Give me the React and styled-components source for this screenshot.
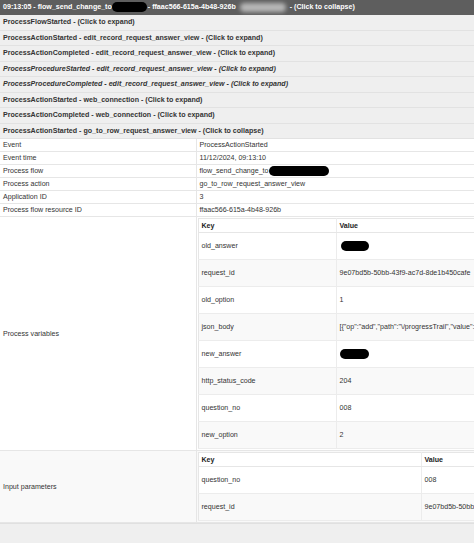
import React from "react";
import styled, { createGlobalStyle } from "styled-components";

const GlobalStyle = createGlobalStyle`
  html, body {
    margin: 0;
    padding: 0;
    overflow: hidden;
    background: #ffffff;
  }
  body {
    font-family: "Liberation Sans", Arial, sans-serif;
    font-size: 7.1px;
    color: #333333;
  }
`;

const Page = styled.div`
  width: 474px;
  height: 543px;
  overflow: hidden;
`;

const Wide = styled.div`
  width: 820px;
`;

const Header = styled.div`
  height: 15px;
  line-height: 14px;
  padding: 0 3px;
  background: #5e5e5e;
  color: #ffffff;
  font-weight: bold;
  white-space: nowrap;
  box-sizing: border-box;
`;

const EventRow = styled.div`
  height: 15.5px;
  line-height: 15px;
  padding: 0 3px;
  background: #efefef;
  border-bottom: 1px solid #e2e2e2;
  box-sizing: border-box;
  font-weight: bold;
  font-style: ${(p) => (p.$italic ? "italic" : "normal")};
  white-space: nowrap;
  cursor: pointer;
`;

const Redact = styled.span`
  display: inline-block;
  vertical-align: middle;
  width: ${(p) => p.$w}px;
  height: ${(p) => p.$h || 10}px;
  margin: 0 ${(p) => p.$mr || 1}px 0 ${(p) => p.$ml || 0}px;
  border-radius: 6px;
  background: ${(p) => (p.$blur ? "rgba(255,255,255,0.55)" : "#000000")};
  filter: ${(p) => (p.$blur ? "blur(2px)" : "none")};
`;

const Table = styled.table`
  border-collapse: collapse;
  table-layout: fixed;
  width: 100%;
`;

const Cell = styled.td`
  border-bottom: 1px solid #e6e6e6;
  border-right: ${(p) => (p.$label ? "1px solid #e6e6e6" : "none")};
  padding: ${(p) => (p.$nest ? "1px 0 1px 1px" : "0 3px")};
  height: ${(p) => (p.$nest ? "auto" : "12px")};
  line-height: 12px;
  white-space: nowrap;
  vertical-align: middle;
  background: ${(p) => p.$bg || "#ffffff"};
  overflow: visible;
`;

const InnerTable = styled.table`
  border-collapse: collapse;
  table-layout: fixed;
  width: 100%;
  border: 1px solid #e6e6e6;
`;

const InnerRow = styled.tr`
  &:nth-child(even) td {
    background: #f9f9f9;
  }
`;

const InnerHead = styled.th`
  text-align: left;
  font-weight: bold;
  height: 13px;
  padding: 0 3px;
  border-bottom: 1px solid #e6e6e6;
  border-right: 1px solid #ececec;
  background: #ffffff;
  color: #222222;
`;

const InnerCell = styled.td`
  height: 26px;
  padding: 0 3px;
  border-bottom: 1px solid #ececec;
  border-right: 1px solid #ececec;
  background: #ffffff;
  white-space: nowrap;
  overflow: visible;
`;

const Footer = styled.div`
  height: 21px;
  background: #efefef;
  border-top: 1px solid #e0e0e0;
`;

const events = [
  { text: "ProcessFlowStarted - (Click to expand)" },
  { text: "ProcessActionStarted - edit_record_request_answer_view - (Click to expand)" },
  { text: "ProcessActionCompleted - edit_record_request_answer_view - (Click to expand)" },
  { text: "ProcessProcedureStarted - edit_record_request_answer_view - (Click to expand)", italic: true },
  { text: "ProcessProcedureCompleted - edit_record_request_answer_view - (Click to expand)", italic: true },
  { text: "ProcessActionStarted - web_connection - (Click to expand)" },
  { text: "ProcessActionCompleted - web_connection - (Click to expand)" },
  { text: "ProcessActionStarted - go_to_row_request_answer_view - (Click to collapse)" },
];

const processVariables = [
  ["old_answer", <Redact $w={28} $ml={1} key="r" />],
  ["request_id", "9e07bd5b-50bb-43f9-ac7d-8de1b450cafe"],
  ["old_option", "1"],
  ["json_body", '[{"op":"add","path":"\\/progressTrail","value":{"step":"008"}}]'],
  ["new_answer", <Redact $w={29} key="r" />],
  ["http_status_code", "204"],
  ["question_no", "008"],
  ["new_option", "2"],
];

const inputParameters = [
  ["question_no", "008"],
  ["request_id", "9e07bd5b-50bb-43f9-ac7d-8de1b450cafe"],
];

const KeyValueTable = ({ rows, keyWidth }) => (
  <InnerTable>
    <colgroup>
      <col style={{ width: keyWidth }} />
      <col />
    </colgroup>
    <thead>
      <tr>
        <InnerHead>Key</InnerHead>
        <InnerHead>Value</InnerHead>
      </tr>
    </thead>
    <tbody>
      {rows.map(([k, v]) => (
        <InnerRow key={k}>
          <InnerCell>{k}</InnerCell>
          <InnerCell>{v}</InnerCell>
        </InnerRow>
      ))}
    </tbody>
  </InnerTable>
);

const App = () => {
  return (
    <Page>
      <GlobalStyle />
      <Wide>
        <Header>
          09:13:05 - flow_send_change_to
          <Redact $w={35} $h={10} />- ffaac566-615a-4b48-926b
          <Redact $w={46} $h={9} $blur $ml={4} $mr={4} />- (Click to collapse)
        </Header>
        {events.map((e, i) => (
          <EventRow key={i} $italic={e.italic}>
            {e.text}
          </EventRow>
        ))}
        <Table>
          <colgroup>
            <col style={{ width: 196 }} />
            <col />
          </colgroup>
          <tbody>
            <tr>
              <Cell $label>Event</Cell>
              <Cell>ProcessActionStarted</Cell>
            </tr>
            <tr>
              <Cell $label>Event time</Cell>
              <Cell>11/12/2024, 09:13:10</Cell>
            </tr>
            <tr>
              <Cell $label>Process flow</Cell>
              <Cell>
                flow_send_change_to
                <Redact $w={60} $h={10} />
              </Cell>
            </tr>
            <tr>
              <Cell $label>Process action</Cell>
              <Cell>go_to_row_request_answer_view</Cell>
            </tr>
            <tr>
              <Cell $label>Application ID</Cell>
              <Cell>3</Cell>
            </tr>
            <tr>
              <Cell $label>Process flow resource ID</Cell>
              <Cell>
                ffaac566-615a-4b48-926b
                <Redact $w={44} $h={8} $blur $ml={6} />
              </Cell>
            </tr>
            <tr>
              <Cell $label>Process variables</Cell>
              <Cell $nest>
                <KeyValueTable rows={processVariables} keyWidth={138} />
              </Cell>
            </tr>
            <tr>
              <Cell $label $bg="#f9f9f9">Input parameters</Cell>
              <Cell $nest $bg="#f9f9f9">
                <KeyValueTable rows={inputParameters} keyWidth={223} />
              </Cell>
            </tr>
          </tbody>
        </Table>
        <Footer />
      </Wide>
    </Page>
  );
};

export default App;
